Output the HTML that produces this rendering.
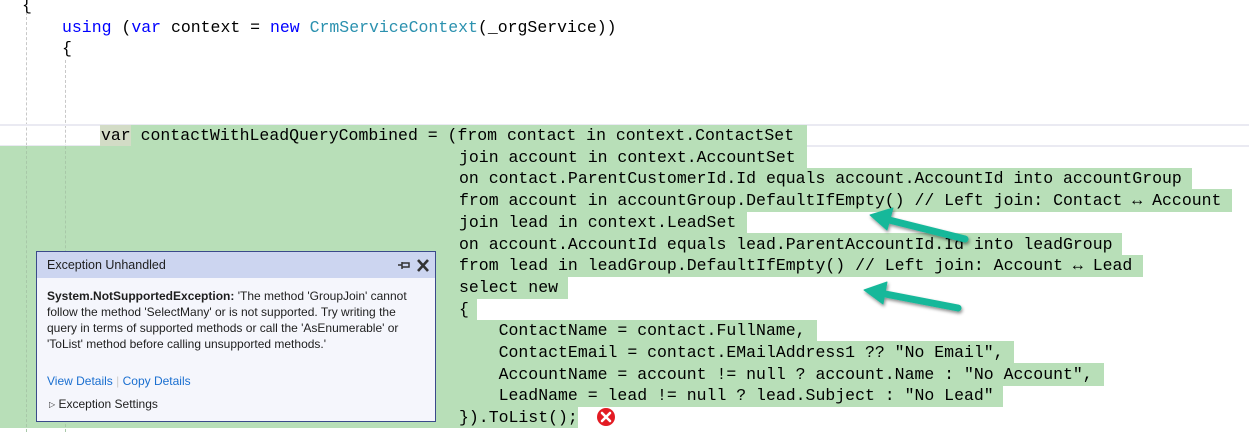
<!DOCTYPE html>
<html><head><meta charset="utf-8"><style>
html,body{margin:0;padding:0;width:1249px;height:432px;overflow:hidden;background:#fff;position:relative}
.g{position:absolute;left:0;background:#b8dfb8;height:22.5px}
.t{position:absolute;font-family:"Liberation Mono",monospace;font-size:16.5px;line-height:21.7px;white-space:pre;color:#000}
.kw{color:#0000ff}.ty{color:#2b91af}
.guide{position:absolute;width:0;border-left:1px dashed #c8c8c8}
#dlg{position:absolute;left:36px;top:251px;width:398px;height:169px;border:1px solid #3a4a8a;background:#f5f6fc;font-family:"Liberation Sans",sans-serif;font-size:12px;color:#1e1e1e}
#hd{height:26px;background:#ccd5f0;line-height:26px;padding-left:10px;font-size:12.5px;color:#1e1e1e}
</style></head><body>
<div class="guide" style="left:26px;top:12px;height:420px"></div>
<div class="guide" style="left:65px;top:60px;height:372px"></div>

<div style="position:absolute;left:0;top:124px;width:1249px;height:23px;border-top:2px solid #eaeaf2;border-bottom:2px solid #eaeaf2;box-sizing:border-box"></div>

<div class="t" style="left:22px;top:-5px">{</div>
<div class="t" style="left:62px;top:17px"><span class="kw">using</span> (<span class="kw">var</span> context = <span class="kw">new</span> <span class="ty">CrmServiceContext</span>(_orgService))</div>
<div class="t" style="left:62px;top:38px">{</div>

<div class="g" style="left:100px;top:125px;width:31px;height:21px;background:#d3dcc6"></div>
<div class="g" style="left:131px;top:125px;width:676px;height:21px"></div>
<div class="g" style="top:146px;width:807px"></div>
<div class="g" style="top:167.7px;width:1192px"></div>
<div class="g" style="top:189.4px;width:1232px"></div>
<div class="g" style="top:211.1px;width:747px"></div>
<div class="g" style="top:232.8px;width:1122px"></div>
<div class="g" style="top:254.5px;width:1143px"></div>
<div class="g" style="top:276.2px;width:568px"></div>
<div class="g" style="top:297.9px;width:477px"></div>
<div class="g" style="top:319.6px;width:817px"></div>
<div class="g" style="top:341.3px;width:1014px"></div>
<div class="g" style="top:363px;width:1104px"></div>
<div class="g" style="top:384.7px;width:1003px"></div>
<div class="g" style="top:406.4px;width:578px;height:21.6px"></div>

<div class="guide" style="left:26px;top:146px;height:286px;border-color:#a8c8a8"></div>
<div class="guide" style="left:65px;top:146px;height:286px;border-color:#a8c8a8"></div>

<div class="t" style="left:101px;top:125px">var contactWithLeadQueryCombined = (from contact in context.ContactSet</div>
<div class="t" style="left:459px;top:146.7px">join account in context.AccountSet
on contact.ParentCustomerId.Id equals account.AccountId into accountGroup
from account in accountGroup.DefaultIfEmpty() // Left join: Contact ↔ Account
join lead in context.LeadSet
on account.AccountId equals lead.ParentAccountId.Id into leadGroup
from lead in leadGroup.DefaultIfEmpty() // Left join: Account ↔ Lead
select new
{
    ContactName = contact.FullName,
    ContactEmail = contact.EMailAddress1 ?? "No Email",
    AccountName = account != null ? account.Name : "No Account",
    LeadName = lead != null ? lead.Subject : "No Lead"
}).ToList();</div>

<svg style="position:absolute;left:0;top:0" width="1249" height="432">
<defs><filter id="sh" x="-20%" y="-50%" width="140%" height="200%"><feDropShadow dx="1" dy="2" stdDeviation="1.5" flood-color="#000" flood-opacity="0.45"/></filter></defs>
<g filter="url(#sh)" fill="#17b89a" stroke="#17b89a" stroke-linecap="round" stroke-linejoin="round">
<line x1="965" y1="239" x2="885" y2="219" stroke-width="7"/>
<polygon points="870,215 893,208 887,230"/>
<line x1="958" y1="308" x2="880" y2="293" stroke-width="7"/>
<polygon points="864,290 887,282 883,304"/>
</g>
<circle cx="606" cy="417" r="9" fill="#e31b23"/>
<path d="M602 413 L610 421 M610 413 L602 421" stroke="#fff" stroke-width="2.6" stroke-linecap="round"/>
</svg>

<div id="dlg">
<div id="hd">Exception Unhandled
<svg style="position:absolute;left:360px;top:7px" width="34" height="14"><path d="M1 6 H5 M5 3 V10 M5 4 H12 V8 H5" stroke="#333" stroke-width="1.5" fill="none"/><path d="M21 1 L31 12 M31 1 L21 12" stroke="#333" stroke-width="2.6"/></svg>
</div>
<div style="position:absolute;left:10px;top:36px;width:380px;line-height:16px"><b>System.NotSupportedException:</b> 'The method 'GroupJoin' cannot follow the method 'SelectMany' or is not supported. Try writing the query in terms of supported methods or call the 'AsEnumerable' or 'ToList' method before calling unsupported methods.'</div>
<div style="position:absolute;left:10px;top:122px;color:#1a6fd0">View Details <span style="color:#ccc">|</span> Copy Details</div>
<div style="position:absolute;left:12px;top:145px"><span style="font-size:8px;position:relative;top:-1px">▷</span> Exception Settings</div>
</div>
</body></html>
